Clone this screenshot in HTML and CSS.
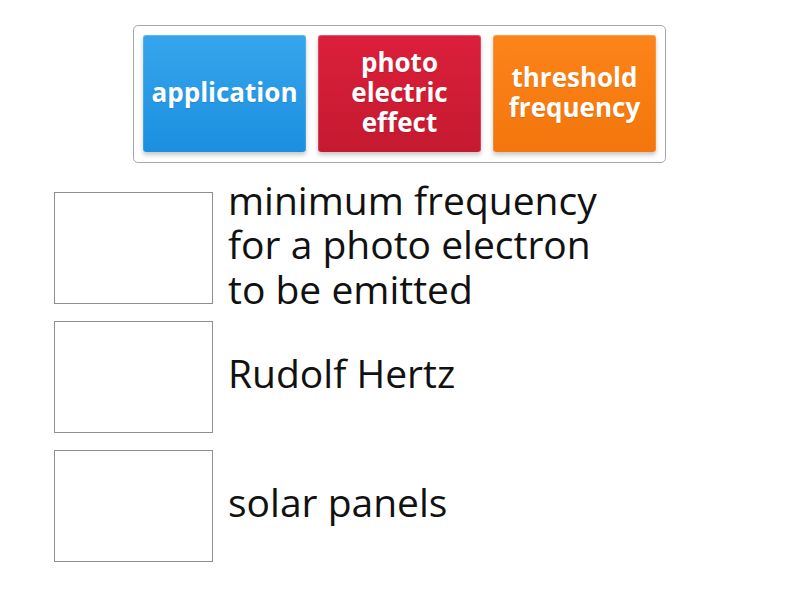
FILE: index.html
```html
<!DOCTYPE html>
<html>
<head>
<meta charset="utf-8">
<link rel="stylesheet" href="styles.css">
</head>
<body>
<div class="page">
  <div class="bank">
    <div class="tile blue"><span>application</span></div>
    <div class="tile red"><span>photo<br>electric<br>effect</span></div>
    <div class="tile orange"><span>threshold<br>frequency</span></div>
  </div>
  <div class="rows">
    <div class="row">
      <div class="slot"></div>
      <div class="def">minimum frequency<br>for a photo electron<br>to be emitted</div>
    </div>
    <div class="row">
      <div class="slot"></div>
      <div class="def">Rudolf Hertz</div>
    </div>
    <div class="row">
      <div class="slot"></div>
      <div class="def">solar panels</div>
    </div>
  </div>
</div>
</body>
</html>
```
FILE: styles.css
```css
html, body {
  margin: 0;
  padding: 0;
  background: #ffffff;
}
body {
  font-family: "Open Sans", "Liberation Sans", sans-serif;
  width: 800px;
  height: 600px;
  overflow: hidden;
}
.page {
  display: flex;
  flex-direction: column;
  padding-top: 25px;
}
.bank {
  align-self: flex-start;
  margin-left: 133px;
  width: 533px;
  height: 138px;
  box-sizing: border-box;
  border: 1px solid #a8a8a8;
  border-radius: 5px;
  padding: 9px 9px 0 9px;
  display: flex;
  gap: 12px;
}
.tile {
  width: 163px;
  height: 117px;
  box-sizing: border-box;
  border-radius: 3px;
  display: flex;
  align-items: center;
  justify-content: center;
  text-align: center;
  color: #ffffff;
  font-weight: 700;
  font-size: 26px;
  line-height: 30px;
  padding-bottom: 3px;
}
.tile span {
  text-shadow: 0 1px 1px rgba(0,0,0,0.1);
}
.blue {
  background: linear-gradient(#36a5ec, #1b8fdf);
  box-shadow: inset 0 1px 0 rgba(255,255,255,0.2), inset 1px 0 0 rgba(255,255,255,0.15), inset -1px 0 0 rgba(255,255,255,0.15), 0 3px 4px rgba(0, 0, 0, 0.22);
}
.red {
  background: linear-gradient(#dc1f3b, #c41a30);
  box-shadow: inset 0 1px 0 rgba(255,255,255,0.25), inset 1px 0 0 rgba(255,255,255,0.18), inset -1px 0 0 rgba(255,255,255,0.18), 0 3px 4px rgba(0, 0, 0, 0.22);
}
.orange {
  background: linear-gradient(#fd841a, #f2760c);
  box-shadow: inset 0 1px 0 rgba(255,255,255,0.2), inset 1px 0 0 rgba(255,255,255,0.15), inset -1px 0 0 rgba(255,255,255,0.15), 0 3px 4px rgba(0, 0, 0, 0.22);
}
.rows {
  display: flex;
  flex-direction: column;
  gap: 17px;
  margin-top: 29px;
  margin-left: 54px;
}
.row {
  display: flex;
  align-items: center;
  height: 112px;
}
.slot {
  width: 159px;
  height: 112px;
  box-sizing: border-box;
  border: 1px solid #8f8f8f;
  flex: none;
}
.def {
  margin-left: 15px;
  margin-bottom: 7px;
  font-size: 39px;
  line-height: 44.5px;
  color: #111111;
}
```
